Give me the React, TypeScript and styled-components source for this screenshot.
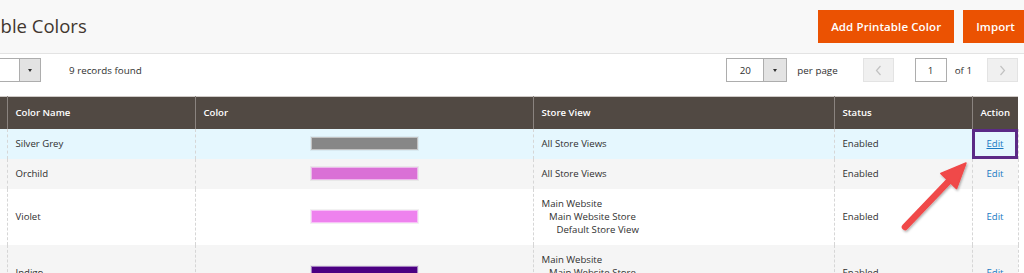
import React from "react";
import styled, { createGlobalStyle } from "styled-components";

const Global = createGlobalStyle`
  html, body { margin: 0; padding: 0; background: #ffffff; overflow: hidden; }
  body { font-family: "Open Sans", "Liberation Sans", sans-serif; color: #303030; }
  * { box-sizing: border-box; }
`;

const Page = styled.div`
  position: relative;
  width: 1078px;
  margin-left: -50px;
`;

const PageHeader = styled.header`
  height: 54px;
  background: #f8f8f8;
  border-bottom: 1px solid #e3e3e3;
  display: flex;
  align-items: center;
  justify-content: space-between;
`;

const Title = styled.h1`
  margin: 0 0 0 -1px;
  font-size: 18.5px;
  font-weight: 400;
  color: #41362f;
  line-height: 1;
  padding-bottom: 1px;
`;

const Actions = styled.div`
  display: flex;
  gap: 9px;
  padding-bottom: 1px;
`;

const PrimaryButton = styled.button`
  height: 33px;
  padding: 0 12px;
  background: #eb5202;
  border: 1px solid #eb5202;
  color: #ffffff;
  font-family: "Open Sans", "Liberation Sans", sans-serif;
  font-size: 11.5px;
  font-weight: 600;
  letter-spacing: 0.1px;
`;

const Grid = styled.section`
  padding-right: 10px;
`;

const Toolbar = styled.div`
  display: flex;
  align-items: center;
  justify-content: space-between;
  margin-top: 4px;
  height: 24px;
  font-size: 9.8px;
  color: #303030;
`;

const Group = styled.div`
  display: flex;
  align-items: center;
`;

const Select = styled.div<{ $w: number }>`
  display: flex;
  width: ${(p) => p.$w}px;
  height: 24px;
  border: 1px solid #adadad;
  background: #fff;
`;

const SelectValue = styled.div`
  flex: 1;
  display: flex;
  align-items: center;
  justify-content: center;
  font-size: 9.8px;
`;

const SelectArrow = styled.div<{ $w: number }>`
  width: ${(p) => p.$w}px;
  border-left: 1px solid #adadad;
  background: #e3e3e3;
  display: flex;
  align-items: center;
  justify-content: center;
  &::after {
    content: "";
    border-left: 2.5px solid transparent;
    border-right: 2.5px solid transparent;
    border-top: 3px solid #303030;
  }
`;

const Label = styled.span<{ $ml: number }>`
  margin-left: ${(p) => p.$ml}px;
  white-space: nowrap;
`;

const PagerButton = styled.div<{ $ml: number }>`
  margin-left: ${(p) => p.$ml}px;
  width: 31px;
  height: 24px;
  background: #f0f0f0;
  border: 1px solid #e3e3e3;
  display: flex;
  align-items: center;
  justify-content: center;
  color: #c2c2c2;
`;

const PageInput = styled.div<{ $ml: number }>`
  margin-left: ${(p) => p.$ml}px;
  width: 32px;
  height: 24px;
  border: 1px solid #adadad;
  display: flex;
  align-items: center;
  justify-content: center;
`;

const Table = styled.table`
  margin-top: 14px;
  width: 100%;
  border-collapse: collapse;
  table-layout: fixed;
  border-top: 1px solid #cfcac7;
  font-size: 9.6px;
`;

const Th = styled.th<{ $center?: boolean }>`
  background: #514943;
  color: #ffffff;
  height: 32px;
  padding: 0 8px;
  text-align: ${(p) => (p.$center ? "center" : "left")};
  font-weight: 600;
  font-size: 9.6px;
  border-left: 1px solid #8a837f;
  &:first-child { border-left: none; }
`;

const Tr = styled.tr<{ $bg: string }>`
  background: ${(p) => p.$bg};
`;

const Td = styled.td<{ $center?: boolean; $highlight?: boolean }>`
  padding: 8.5px 8px;
  line-height: 13px;
  vertical-align: middle;
  text-align: ${(p) => (p.$center ? "center" : "left")};
  color: #303030;
  border-left: 1px dashed #d6d6d6;
  &:first-child { border-left: none; }
  &:last-child { border-right: 1px dashed #d6d6d6; }
  ${(p) => (p.$highlight ? "outline: 3px solid #5b2a86; outline-offset: -3px;" : "")}
`;

const Swatch = styled.div`
  width: 107px;
  height: 13px;
  margin: 0 auto;
  border: 1px solid rgba(255, 255, 255, 0.5);
  outline: 1px solid rgba(0, 0, 0, 0.05);
`;

const StoreLine = styled.div<{ $level: number }>`
  padding-left: ${(p) => p.$level * 7.5}px;
`;

const EditLink = styled.a<{ $underline?: boolean }>`
  color: #1979c3;
  text-decoration: ${(p) => (p.$underline ? "underline" : "none")};
  cursor: pointer;
`;

const ArrowSvg = styled.svg`
  position: absolute;
  left: 950px;
  top: 158px;
  overflow: visible;
`;

type Row = { name: string; color: string; store: "all" | "main"; bg: string };

const rows: Row[] = [
  { name: "Silver Grey", color: "#878787", store: "all", bg: "#e5f7fe" },
  { name: "Orchild", color: "#da70d6", store: "all", bg: "#f5f5f5" },
  { name: "Violet", color: "#ee82ee", store: "main", bg: "#ffffff" },
  { name: "Indigo", color: "#4b0082", store: "main", bg: "#f5f5f5" },
];

const Chevron = ({ dir }: { dir: "l" | "r" }) => (
  <svg width="7" height="11" viewBox="0 0 7 11">
    <path
      d={dir === "l" ? "M5.5 1 L1.5 5.5 L5.5 10" : "M1.5 1 L5.5 5.5 L1.5 10"}
      fill="none"
      stroke="#c2c2c2"
      strokeWidth="1.2"
    />
  </svg>
);

export default function App() {
  return (
    <>
      <Global />
      <Page>
        <PageHeader>
          <Title>Printable Colors</Title>
          <Actions>
            <PrimaryButton>Add Printable Color</PrimaryButton>
            <PrimaryButton>Import</PrimaryButton>
          </Actions>
        </PageHeader>
        <Grid>
          <Toolbar>
            <Group>
              <Select $w={91}>
                <SelectValue />
                <SelectArrow $w={21} />
              </Select>
              <Label $ml={28}>9 records found</Label>
            </Group>
            <Group>
              <Select $w={61}>
                <SelectValue>20</SelectValue>
                <SelectArrow $w={23} />
              </Select>
              <Label $ml={10}>per page</Label>
              <PagerButton $ml={25}>
                <Chevron dir="l" />
              </PagerButton>
              <PageInput $ml={21}>1</PageInput>
              <Label $ml={8}>of 1</Label>
              <PagerButton $ml={15}>
                <Chevron dir="r" />
              </PagerButton>
            </Group>
          </Toolbar>
          <Table>
            <colgroup>
              <col style={{ width: 57 }} />
              <col style={{ width: 188 }} />
              <col style={{ width: 338 }} />
              <col style={{ width: 301 }} />
              <col style={{ width: 138 }} />
              <col style={{ width: 46 }} />
            </colgroup>
            <thead>
              <tr>
                <Th />
                <Th>Color Name</Th>
                <Th>Color</Th>
                <Th>Store View</Th>
                <Th>Status</Th>
                <Th $center>Action</Th>
              </tr>
            </thead>
            <tbody>
              {rows.map((r, i) => (
                <Tr key={r.name} $bg={r.bg}>
                  <Td />
                  <Td>{r.name}</Td>
                  <Td>
                    <Swatch style={{ background: r.color }} />
                  </Td>
                  <Td>
                    {r.store === "all" ? (
                      "All Store Views"
                    ) : (
                      <>
                        <StoreLine $level={0}>Main Website</StoreLine>
                        <StoreLine $level={1}>Main Website Store</StoreLine>
                        <StoreLine $level={2}>Default Store View</StoreLine>
                      </>
                    )}
                  </Td>
                  <Td>Enabled</Td>
                  <Td $center $highlight={i === 0}>
                    <EditLink $underline={i === 0}>Edit</EditLink>
                  </Td>
                </Tr>
              ))}
            </tbody>
          </Table>
        </Grid>
        <ArrowSvg width="75" height="80" viewBox="0 0 75 80">
          <defs>
            <filter id="sh" x="-30%" y="-30%" width="160%" height="160%">
              <feDropShadow dx="1" dy="1.5" stdDeviation="1.2" floodColor="#000" floodOpacity="0.3" />
            </filter>
          </defs>
          <g filter="url(#sh)">
            <line x1="5" y1="69" x2="49" y2="23" stroke="#f04848" strokeWidth="6.5" strokeLinecap="round" />
            <path d="M66 5 L56.6 30.6 L40.8 15.4 Z" fill="#f04848" stroke="#f04848" strokeWidth="1.5" strokeLinejoin="round" />
          </g>
        </ArrowSvg>
      </Page>
    </>
  );
}
